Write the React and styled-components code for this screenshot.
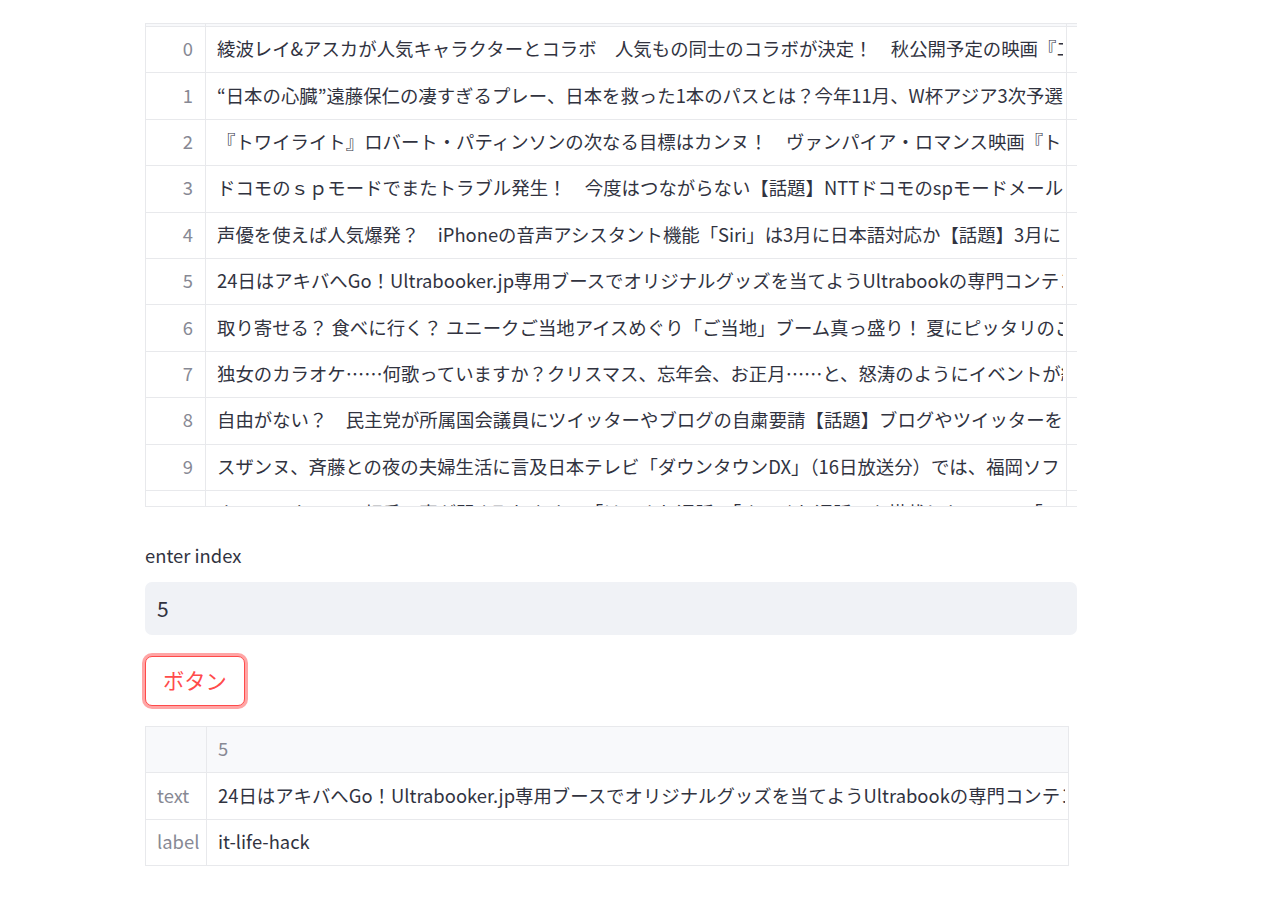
import styled, { createGlobalStyle } from "styled-components";

const GlobalStyle = createGlobalStyle`
  body {
    margin: 0;
    background: #ffffff;
    font-family: "Noto Sans CJK JP", "Noto Sans", sans-serif;
    color: #31333f;
  }
`;

const Main = styled.div`
  width: 932px;
  margin-left: 145px;
  padding-top: 23px;
  display: flex;
  flex-direction: column;
  gap: 21px;
`;

const Viewport = styled.div`
  height: 484px;
  border: 1px solid #e8e9ec;
  border-right: none;
  box-sizing: border-box;
  overflow: hidden;
`;

const Grid = styled.div`
  display: grid;
  grid-template-columns: ${(p) => p.$cols};
  grid-auto-rows: 46.4px;
  margin-top: ${(p) => p.$offset || 0}px;
`;

const Cell = styled.div`
  display: flex;
  align-items: center;
  justify-content: ${(p) => (p.$align === "right" ? "flex-end" : "flex-start")};
  padding: 0 ${(p) => (p.$align === "right" ? "12px" : "3px")} 3px ${(p) => (p.$align === "right" ? "0" : "11px")};
  border-right: 1px solid #e8e9ec;
  border-bottom: 1px solid #e8e9ec;
  background: ${(p) => (p.$head ? "#f8f9fb" : "#ffffff")};
  color: ${(p) => (p.$muted ? "#878994" : "#31333f")};
  font-size: 18.4px;
  white-space: nowrap;
  overflow: hidden;
  min-width: 0;
`;

const CellText = styled.span`
  overflow: hidden;
`;

const SmallTable = styled.div`
  width: 924px;
  margin-top: -1px;
  border-top: 1px solid #e8e9ec;
  border-left: 1px solid #e8e9ec;
  box-sizing: border-box;
`;

const Field = styled.div`
  display: flex;
  flex-direction: column;
`;

const Label = styled.label`
  height: 54px;
  display: flex;
  align-items: center;
  font-size: 18.4px;
  color: #31333f;
`;

const Input = styled.input`
  height: 53px;
  box-sizing: border-box;
  border: none;
  border-radius: 7px;
  background: #f0f2f6;
  padding: 0 12px 2px;
  font-family: inherit;
  font-size: 21px;
  color: #31333f;
  outline: none;
`;

const ButtonRow = styled.div`
  display: flex;
`;

const Button = styled.button`
  height: 50px;
  padding: 0 17px 4px;
  border: 1px solid #ff4b4b;
  border-radius: 7px;
  background: #ffffff;
  color: #ff4b4b;
  font-family: inherit;
  font-size: 21.3px;
  box-shadow: 0 0 0 3px rgba(255, 75, 75, 0.5);
  cursor: pointer;
`;

const rows = [
  "綾波レイ&アスカが人気キャラクターとコラボ　人気もの同士のコラボが決定！　秋公開予定の映画『ヱヴァンゲリヲン新劇場版：Q』",
  "“日本の心臓”遠藤保仁の凄すぎるプレー、日本を救った1本のパスとは？今年11月、W杯アジア3次予選の北朝鮮戦",
  "『トワイライト』ロバート・パティンソンの次なる目標はカンヌ！　ヴァンパイア・ロマンス映画『トワイライト』シリーズ",
  "ドコモのｓｐモードでまたトラブル発生！　今度はつながらない【話題】NTTドコモのspモードメールが利用できない",
  "声優を使えば人気爆発？　iPhoneの音声アシスタント機能「Siri」は3月に日本語対応か【話題】3月に日本語対応",
  "24日はアキバへGo！Ultrabooker.jp専用ブースでオリジナルグッズを当てようUltrabookの専門コンテンツサイト",
  "取り寄せる？ 食べに行く？ ユニークご当地アイスめぐり「ご当地」ブーム真っ盛り！ 夏にピッタリのご当地アイス",
  "独女のカラオケ……何歌っていますか？クリスマス、忘年会、お正月……と、怒涛のようにイベントが続く季節",
  "自由がない？　民主党が所属国会議員にツイッターやブログの自粛要請【話題】ブログやツイッターを利用する議員",
  "スザンヌ、斉藤との夜の夫婦生活に言及日本テレビ「ダウンタウンDX」（16日放送分）では、福岡ソフトバンクホークス",
  "ホールスクエア　相手の声が聞き取りやすい「はっきり通話」「ゆっくり通話」を搭載したAQUOS「Smart」シリーズ",
];

export default function App() {
  return (
    <>
      <GlobalStyle />
      <Main>
        <Viewport>
          <Grid $cols="60px 861px 220px" $offset={-43.4}>
            <Cell $head $muted $align="right" />
            <Cell $head $muted />
            <Cell $head $muted />
            {rows.map((text, i) => (
              <>
                <Cell key={`i${i}`} $muted $align="right">{i}</Cell>
                <Cell key={`t${i}`}><CellText>{text}</CellText></Cell>
                <Cell key={`l${i}`} />
              </>
            ))}
          </Grid>
        </Viewport>

        <Field>
          <Label htmlFor="idx">enter index</Label>
          <Input id="idx" defaultValue="5" />
        </Field>

        <ButtonRow>
          <Button>ボタン</Button>
        </ButtonRow>

        <SmallTable>
          <Grid $cols="61px 1fr">
            <Cell $head $muted />
            <Cell $head $muted>5</Cell>
            <Cell $muted>text</Cell>
            <Cell><CellText>{rows[5]}</CellText></Cell>
            <Cell $muted>label</Cell>
            <Cell>it-life-hack</Cell>
          </Grid>
        </SmallTable>
      </Main>
    </>
  );
}
